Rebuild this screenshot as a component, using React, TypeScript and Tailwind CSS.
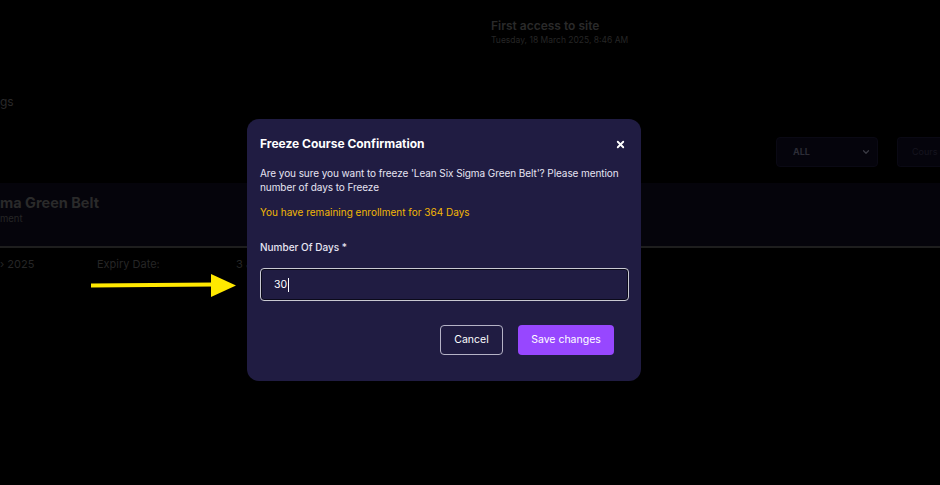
import { ChevronDown, X } from "lucide-react";

const font = { fontFamily: "Inter, 'Open Sans', sans-serif" };

const Backdrop = () => (
  <div className="flex h-[485px] w-[940px] flex-col overflow-hidden bg-black">
    {/* header info */}
    <div className="ml-[491px] mt-[19px] flex flex-col">
      <span className="text-[12px] font-semibold leading-[14px] text-[#2a2a2a]">First access to site</span>
      <span className="mt-[1px] text-[8.5px] leading-[12px] text-[#262626]">Tuesday, 18 March 2025, 8:46 AM</span>
    </div>

    <div className="mt-[49px] text-[12px] leading-[14px] text-[#2a2a2a]">gs</div>

    {/* filters */}
    <div className="mt-[28px] flex justify-end gap-[19px]">
      <div className="flex h-[30px] w-[102px] items-center justify-between rounded-[4px] border border-[#0a0914] bg-[#05040c] pl-[16px] pr-[6px]">
        <span className="text-[9px] font-bold text-[#2c2c36]">ALL</span>
        <ChevronDown className="h-[10px] w-[10px] text-[#3a3a44]" strokeWidth={3} />
      </div>
      <div className="flex h-[30px] w-[43px] items-center rounded-l-[4px] border border-r-0 border-[#0a0914] bg-[#05040c] pl-[14px]">
        <span className="whitespace-nowrap text-[9px] text-[#15141f]">Cours</span>
      </div>
    </div>

    {/* course card */}
    <div className="mt-[16px] flex h-[63px] flex-col bg-[#05040b] pt-[11px]">
      <span className="text-[14.5px] font-bold leading-[18px] text-[#2a2a2a]">ma Green Belt</span>
      <span className="mt-[1px] text-[9.5px] leading-[12px] text-[#262626]">ment</span>
    </div>
    <div className="h-[2px] bg-[#1e1e1e]" />
    <div className="mt-[9px] flex text-[11px] leading-[14px] text-[#262626]">
      <span className="w-[97px]">› 2025</span>
      <span className="w-[139px]">Expiry Date:</span>
      <span>3 J</span>
    </div>
  </div>
);

const Arrow = () => (
  <svg className="absolute left-[90px] top-[273px]" width="148" height="26" viewBox="0 0 148 26">
    <line x1="1" y1="12.5" x2="124" y2="11.5" stroke="#ffe800" strokeWidth="4" />
    <polygon points="121,1 146,12.5 121,24" fill="#ffe800" />
  </svg>
);

const Modal = () => (
  <div className="absolute left-[247px] top-[119px] flex h-[262px] w-[394px] flex-col rounded-[12px] bg-[#201c42] pl-[13px] pr-[12px] pt-[17px]">
    <div className="flex h-[16px] items-center justify-between pr-[3px]">
      <span className="text-[12px] font-bold leading-[16px] text-white">Freeze Course Confirmation</span>
      <X className="h-[11px] w-[11px] text-white" strokeWidth={4} />
    </div>
    <p className="mt-[14px] text-[10px] leading-[14px] tracking-[-0.08px] text-[#e6e4f2]">
      Are you sure you want to freeze 'Lean Six Sigma Green Belt'? Please mention number of days to Freeze
    </p>
    <p className="mt-[11px] text-[10px] leading-[14px] text-[#f2b705]">You have remaining enrollment for 364 Days</p>
    <label className="mt-[21px] text-[10px] font-medium leading-[14px] text-[#e6e4f2]">Number Of Days *</label>
    <div className="mt-[14px] flex h-[33px] items-center rounded-[4px] border border-[#c9c9d2] pl-[13px] shadow-[inset_0_0_0_1px_#0b0a1a]">
      <span className="text-[10.5px] text-white">30</span>
      <span className="ml-[0.5px] h-[14px] w-[1px] bg-white" />
    </div>
    <div className="mt-[24px] flex justify-end gap-[15px] pr-[15px]">
      <button className="h-[30px] w-[63px] rounded-[4px] border border-[#b5b3c6] text-[10.5px] text-white">Cancel</button>
      <button className="h-[30px] w-[96px] rounded-[4px] bg-[#9747ff] text-[10.5px] text-white">Save changes</button>
    </div>
  </div>
);

export default function App() {
  return (
    <div className="relative h-[485px] w-[940px] overflow-hidden" style={font}>
      <Backdrop />
      <Arrow />
      <Modal />
    </div>
  );
}
